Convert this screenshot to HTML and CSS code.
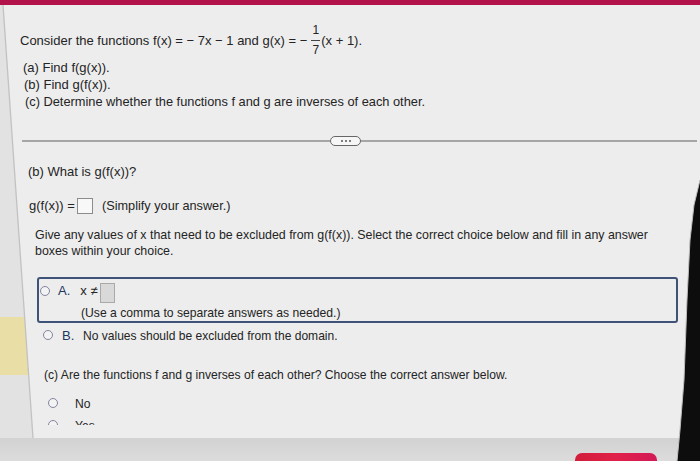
FILE: index.html
```html
<!DOCTYPE html>
<html>
<head>
<meta charset="utf-8">
<link rel="stylesheet" href="styles.css">
</head>
<body>
<div class="topbar"></div>
<div class="panel">
  <svg class="gutter" width="40" height="433" viewBox="0 0 40 433">
    <polygon points="0,0 3,0 33,433 0,433" fill="#e2e2e2"/>
    <polygon points="0,312 24.6,312 28.6,370 0,370" fill="#e9dea6"/>
    <line x1="3" y1="0" x2="33" y2="433" stroke="#c2c2c2" stroke-width="1.3"/>
  </svg>
  <div class="content">
    <div class="intro">
      <div class="l1">
        <span>Consider the functions f(x) = − 7x − 1 and g(x) = −</span>
        <span class="frac"><span class="num">1</span><span class="bar"></span><span class="den">7</span></span>
        <span>(x + 1).</span>
      </div>
      <p class="la">(a) Find f(g(x)).</p>
      <p class="lb">(b) Find g(f(x)).</p>
      <p class="lc">(c) Determine whether the functions f and g are inverses of each other.</p>
    </div>
    <div class="divider">
      <span class="dline first"></span>
      <span class="pill"><i></i><i></i><i></i></span>
      <span class="dline"></span>
    </div>
    <p class="qb">(b) What is g(f(x))?</p>
    <div class="ansrow">
      <span>g(f(x)) =</span>
      <span class="inbox"></span>
      <span class="hint">(Simplify your answer.)</span>
    </div>
    <p class="give">Give any values of x that need to be excluded from g(f(x)). Select the correct choice below and fill in any answer<br>boxes within your choice.</p>
    <div class="choice">
      <div class="rowa">
        <span class="radio"></span>
        <span class="lbl">A.</span>
        <span class="neq">x ≠</span>
        <span class="inbox gray"></span>
      </div>
      <p class="note">(Use a comma to separate answers as needed.)</p>
    </div>
    <div class="rowb">
      <span class="radio"></span>
      <span class="lbl">B.</span>
      <span class="btxt">No values should be excluded from the domain.</span>
    </div>
    <p class="qc">(c) Are the functions f and g inverses of each other? Choose the correct answer below.</p>
    <div class="opt first">
      <span class="radio"></span>
      <span class="otxt">No</span>
    </div>
    <div class="opt">
      <span class="radio"></span>
      <span class="otxt">Yes</span>
    </div>
  </div>
</div>
<div class="bottom"><div class="redbtn"></div></div>
<svg class="bezel" width="700" height="461" viewBox="0 0 700 461">
  <polygon points="700,180 694,205 690,240 687,300 684,380 680,430 677,461 700,461" fill="#0d0d0d"/>
  <polyline points="700,180 694,205 690,240 687,300 684,380 680,430 677,461" fill="none" stroke="#bdbdbd" stroke-width="1"/>
</svg>
</body>
</html>
```
FILE: styles.css
```css
* { box-sizing: border-box; margin: 0; padding: 0; }
html, body { width: 700px; height: 461px; overflow: hidden; }
body {
  background: #e4e4e4;
  font-family: "Liberation Sans", Arial, sans-serif;
  font-size: 13px;
  line-height: 17px;
  color: #242424;
  position: relative;
}
.topbar { height: 5px; background: #b2134b; }
.panel { height: 433px; background: #ededed; position: relative; }
.gutter { position: absolute; left: 0; top: 0; pointer-events: none; }
.content { height: 420px; overflow: hidden; position: relative; }

.intro { padding-top: 18px; }
.l1 { display: flex; align-items: center; height: 34px; margin-left: 20px; white-space: nowrap; }
.frac { display: flex; flex-direction: column; align-items: center; margin: 0 1px 0 4px; font-size: 12px; line-height: 13px; }
.frac .bar { width: 9px; height: 1px; background: #444; margin: 3px 0; }
.la { margin: 2px 0 0 23px; }
.lb { margin-left: 24px; }
.lc { margin-left: 25px; transform: scaleX(.985); transform-origin: 0 0; }

.divider { display: flex; align-items: center; height: 10px; margin: 26px 0 0 22px; width: 675px; }
.dline { height: 2px; background: #a6a6a6; flex: 1; }
.dline.first { flex: 0 0 308px; }
.pill {
  width: 31px; height: 10px; border: 1.5px solid #666; border-radius: 5px; background: #f6f6f6;
  display: flex; align-items: center; justify-content: center; gap: 2px;
}
.pill i { display: block; width: 2px; height: 2px; border-radius: 50%; background: #555; }

.qb { margin: 17px 0 0 28px; }
.ansrow { display: flex; align-items: center; height: 17px; margin: 17px 0 0 29px; }
.inbox { display: block; width: 16px; height: 16px; border: 1px solid #8c8c8c; background: #f8f8f8; margin-left: 2px; }
.hint { margin-left: 9px; transform: scaleX(.977); transform-origin: 0 0; }
.give { margin: 13px 0 0 35px; line-height: 16px; white-space: nowrap; transform: scaleX(.953); transform-origin: 0 0; }

.choice {
  margin: 18px 0 0 37px; width: 641px; height: 46px;
  border: 2px solid #3e5377; border-radius: 3px; padding: 2px 0 0 1px;
}
.rowa { display: flex; align-items: flex-start; height: 22px; }
.radio { display: block; width: 10px; height: 10px; border: 1.5px solid #82859f; border-radius: 50%; background: #f3f3f3; flex: none; }
.rowa .radio { margin-top: 5px; }
.lbl { color: #22375f; }
.rowa .lbl { margin: 1px 0 0 8px; }
.neq { margin: 1px 0 0 10px; }
.inbox.gray { width: 15px; height: 20px; background: #d9d9d9; border-color: #a9a9a9; margin: 2px 0 0 2px; }
.note { margin: 1px 0 0 41px; white-space: nowrap; transform: scaleX(.935); transform-origin: 0 0; }

.rowb { display: flex; align-items: flex-start; margin: 4px 0 0 43px; }
.rowb .radio { margin-top: 3px; }
.rowb .lbl { margin-left: 9px; }
.btxt { margin-left: 9px; white-space: nowrap; transform: scaleX(.927); transform-origin: 0 0; }

.qc { margin: 22px 0 0 44px; white-space: nowrap; transform: scaleX(.932); transform-origin: 0 0; }
.opt { display: flex; align-items: flex-start; margin: 5px 0 0 48px; }
.opt.first { margin-top: 12px; }
.opt .radio { margin-top: 3px; }
.otxt { margin-left: 17px; transform: scaleX(.93); transform-origin: 0 0; }

.bottom { height: 23px; background: linear-gradient(#d2d2d2, #dcdcdc); padding: 15px 0 0 575px; }
.redbtn { width: 82px; height: 8px; border-radius: 7px 7px 0 0; background: linear-gradient(90deg, #d21d3a, #e1214a, #d31a57); }
.bezel { position: absolute; left: 0; top: 0; pointer-events: none; }
```
